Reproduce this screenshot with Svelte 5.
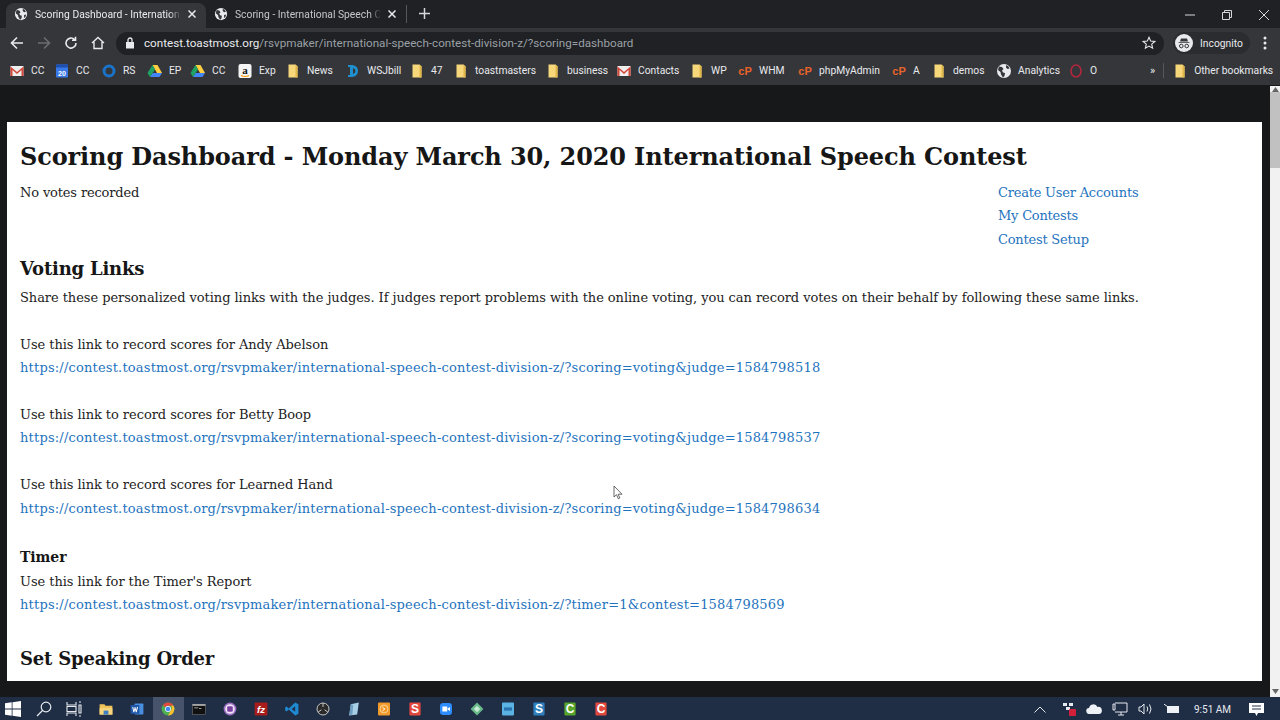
<script lang="ts">
  // Browser window with a scoring dashboard page, and the Windows taskbar below it.
  const site = 'https://contest.toastmost.org/rsvpmaker/international-speech-contest-division-z/';

  const judges = [
    { name: 'Andy Abelson', id: '1584798518' },
    { name: 'Betty Boop', id: '1584798537' },
    { name: 'Learned Hand', id: '1584798634' },
  ];

  const marks = [
    { kind: 'gmail', label: 'CC', w: 45 },
    { kind: 'cal', label: 'CC', w: 47 },
    { kind: 'ring', label: 'RS', w: 46 },
    { kind: 'drive', label: 'EP', w: 43 },
    { kind: 'drive', label: 'CC', w: 47 },
    { kind: 'amazon', label: 'Exp', w: 48 },
    { kind: 'folder', label: 'News', w: 60 },
    { kind: 'doc', label: 'WSJbill', w: 64 },
    { kind: 'folder', label: '47', w: 44 },
    { kind: 'folder', label: 'toastmasters', w: 92 },
    { kind: 'folder', label: 'business', w: 71 },
    { kind: 'gmail', label: 'Contacts', w: 73 },
    { kind: 'folder', label: 'WP', w: 48 },
    { kind: 'cp', label: 'WHM', w: 60 },
    { kind: 'cp', label: 'phpMyAdmin', w: 94 },
    { kind: 'cp', label: 'A', w: 40 },
    { kind: 'folder', label: 'demos', w: 65 },
    { kind: 'globe', label: 'Analytics', w: 72 },
    { kind: 'opera', label: 'O', w: 78 },
  ];

  const tasks = ['files', 'word', 'chrome', 'cmd', 'obs', 'fz', 'vs', 'cam', 'note', 'sub', 's1', 'zoom', 'gem', 'scr', 's2', 'c1', 'c2'];
</script>

{#snippet globe(size)}
  <svg class="fixed" width={size} height={size} viewBox="0 0 16 16">
    <circle cx="8" cy="8" r="7" fill="#e8eaed" />
    <path d="M3 3.500l3 .5 1.500 2-1.500 1.500 1 2 2 .5-.5 3-1.500 1.500-2-3-.5-2.500-2.500-2zM10 2l2.500 1.500 1 2-2 .5-1.500-1.500zM11.500 9l2.500-.5-1 3-1.500 1z" fill="#35363a" />
  </svg>
{/snippet}

{#snippet tabClose()}
  <svg class="fixed" width="8" height="8" viewBox="0 0 8 8"><path d="M.5.5l7 7M7.500.5l-7 7" stroke="#e8eaed" stroke-width="1.500" /></svg>
{/snippet}

{#snippet mark(kind)}
  <svg class="fixed" width="16" height="16" viewBox="0 0 16 16">
    {#if kind === 'gmail'}
      <rect x="1.500" y="3" width="13" height="10" fill="#eee" />
      <path d="M1.500 3.500L8 9l6.500-5.500V13h-2V7L8 11 3.500 7v6h-2z" fill="#d44638" />
    {:else if kind === 'cal'}
      <rect x="2" y="1.500" width="12" height="13" rx="1" fill="#3b78e7" />
      <rect x="2" y="1.500" width="12" height="3" fill="#1c4fb0" />
      <text x="8" y="12.500" text-anchor="middle" class="cal-num">20</text>
    {:else if kind === 'ring'}
      <circle cx="8" cy="8" r="5" fill="none" stroke="#1a73c8" stroke-width="3" />
    {:else if kind === 'drive'}
      <path d="M5.500 2h5l4.500 8h-5z" fill="#ffcf3f" />
      <path d="M3 14l2.500-4H15l-2.500 4z" fill="#4285f4" />
      <path d="M5.500 2l2.500 4.500L3 14l-2.500-4z" fill="#1ea362" />
    {:else if kind === 'amazon'}
      <rect x="1.500" y="1" width="13" height="14" rx="2" fill="#f5f5f5" />
      <text x="8" y="11" text-anchor="middle" class="amz">a</text>
      <path d="M4 12.500q4 2 8 0" fill="none" stroke="#f90" stroke-width="1.200" />
    {:else if kind === 'folder'}
      <path d="M3.500 1.500h7l2 2V14.500h-9z" fill="#f6d77a" />
      <path d="M10.500 1.500l2 2V14.500h-2z" fill="#e0b54a" />
    {:else if kind === 'doc'}
      <path d="M3 2h4.500q5.500 1 5.500 6t-5.500 6H3v-2h2V4H3z" fill="#1f8fce" />
      <path d="M8 5q2.500 1 2.500 3T8 11z" fill="#35363a" />
    {:else if kind === 'cp'}
      <text x="8" y="12" text-anchor="middle" class="cp">cP</text>
    {:else if kind === 'globe'}
      <circle cx="8" cy="8" r="7" fill="#e8eaed" />
      <path d="M3 3.500l3 .5 1.500 2-1.500 1.500 1 2 2 .5-.5 3-1.500 1.500-2-3-.5-2.500-2.500-2zM10 2l2.500 1.500 1 2-2 .5-1.500-1.500z" fill="#35363a" />
    {:else if kind === 'opera'}
      <ellipse cx="8" cy="8" rx="5" ry="6" fill="none" stroke="#b3263c" stroke-width="1.600" />
    {/if}
  </svg>
{/snippet}

{#snippet taskIcon(kind)}
  <svg width="20" height="20" viewBox="0 0 20 20">
    {#if kind === 'files'}
      <path d="M2 4h6l1.500 2H18v11H2z" fill="#f0c25a" />
      <rect x="2" y="9" width="16" height="8" fill="#f7d67d" />
      <rect x="7" y="12" width="6" height="5" fill="#3d7fc4" />
    {:else if kind === 'word'}
      <rect x="7" y="3" width="11" height="14" rx="1" fill="#4a8ee0" />
      <rect x="2" y="5" width="11" height="11" fill="#1f57a8" />
      <path d="M4 7.500h1.300l.9 4 1-4h.8l1 4 .9-4H11.300L9.700 14H8.500l-.9-3.500-.9 3.500H5.500z" fill="#fff" />
    {:else if kind === 'chrome'}
      <circle cx="10" cy="10" r="8" fill="#4caf50" />
      <path d="M10 2a8 8 0 0 1 7 4H10a4 4 0 0 0-3.500 2L3.800 5A8 8 0 0 1 10 2z" fill="#e2483d" />
      <path d="M17 6a8 8 0 0 1-7 12l3.500-6a4 4 0 0 0 0-6z" fill="#fbc02d" />
      <circle cx="10" cy="10" r="3.400" fill="#4285f4" stroke="#fff" stroke-width="1" />
    {:else if kind === 'cmd'}
      <rect x="2" y="4" width="16" height="13" fill="#111" stroke="#888" stroke-width=".6" />
      <rect x="2" y="4" width="16" height="2" fill="#bbb" />
      <path d="M4 8h5v1H4zM10 9h3v1h-3z" fill="#ccc" />
    {:else if kind === 'obs'}
      <circle cx="10" cy="10" r="8" fill="#9d6fc4" />
      <circle cx="10" cy="10" r="6" fill="#efe6f5" />
      <rect x="6.500" y="6.500" width="7" height="7" rx="1.500" fill="#7a3f9f" />
    {:else if kind === 'fz'}
      <rect x="2" y="2" width="16" height="16" rx="1" fill="#a81c1c" />
      <text x="10" y="15" text-anchor="middle" class="fz">fz</text>
    {:else if kind === 'vs'}
      <path d="M14 2l4 2v12l-4 2-8-7.500L3 13l-1.500-1V8L3 7l3 2.500z" fill="#1f8ad2" />
      <path d="M14 6.500L9.500 10l4.500 3.500z" fill="#1e3050" />
    {:else if kind === 'cam'}
      <circle cx="10" cy="10" r="7.500" fill="#2a2a2a" stroke="#ccc" stroke-width="1.200" />
      <path d="M10 2.500v5M3.800 14L8 11M16.200 14L12 11" stroke="#ccc" stroke-width="1.200" />
    {:else if kind === 'note'}
      <path d="M6 4l10-2-2 15-10 1z" fill="#a8cfe6" />
      <path d="M6 4l3 1-1 12-4 1z" fill="#6f9fc0" />
    {:else if kind === 'sub'}
      <rect x="2.500" y="2" width="15" height="16" rx="1" fill="#f09a2b" />
      <circle cx="10" cy="10" r="5" fill="none" stroke="#ffe0ac" stroke-width="1" />
      <path d="M8 7.500l3 2.500-3 2.500" fill="none" stroke="#fff" stroke-width="1.200" />
    {:else if kind === 's1'}
      <rect x="3" y="2" width="14" height="16" rx="1" fill="#e2483d" />
      <text x="10" y="15.500" text-anchor="middle" class="tile">S</text>
    {:else if kind === 'zoom'}
      <rect x="2.500" y="2.500" width="15" height="15" rx="4" fill="#2d8cff" />
      <path d="M5.500 7h6v6h-6zM12 9.500l3-2v5l-3-2z" fill="#fff" />
    {:else if kind === 'gem'}
      <path d="M10 2l8 8-8 8-8-8z" fill="#69b98a" />
      <path d="M10 6l4 4-4 4-4-4z" fill="#c7ecd4" />
    {:else if kind === 'scr'}
      <rect x="2.500" y="2" width="15" height="16" rx="1" fill="#5bb3e4" />
      <rect x="5" y="8" width="10" height="4" fill="#2872b0" />
    {:else if kind === 's2'}
      <rect x="3" y="2" width="14" height="16" rx="1" fill="#2f7fbe" />
      <text x="10" y="15.500" text-anchor="middle" class="tile">S</text>
    {:else if kind === 'c1'}
      <rect x="3" y="2" width="14" height="16" rx="1" fill="#57a62b" />
      <text x="10" y="15.500" text-anchor="middle" class="tile">C</text>
    {:else if kind === 'c2'}
      <rect x="3" y="2" width="14" height="16" rx="1" fill="#e2483d" />
      <text x="10" y="15.500" text-anchor="middle" class="tile">C</text>
    {/if}
  </svg>
{/snippet}

<div class="screen">
  <div class="tabstrip">
    <div class="tab active">
      {@render globe(14)}
      <span class="tab-title">Scoring Dashboard - Internationa</span>
      {@render tabClose()}
    </div>
    <div class="tab">
      {@render globe(14)}
      <span class="tab-title">Scoring - International Speech Cc</span>
      {@render tabClose()}
    </div>
    <span class="tab-sep"></span>
    <svg class="newtab" width="11" height="11" viewBox="0 0 11 11"><path d="M5.500 0v11M0 5.500h11" stroke="#d5d7da" stroke-width="1.500" /></svg>
    <div class="winbtns">
      <svg width="10" height="10" viewBox="0 0 10 10"><path d="M0 5h10" stroke="#d5d7da" /></svg>
      <svg width="10" height="10" viewBox="0 0 10 10"><path d="M2.500 2.500V.5h7v7h-2M.5 2.500h7v7h-7z" fill="none" stroke="#d5d7da" /></svg>
      <svg width="10" height="10" viewBox="0 0 10 10"><path d="M0 0l10 10M10 0L0 10" stroke="#d5d7da" /></svg>
    </div>
  </div>

  <div class="toolbar">
    <svg width="14" height="14" viewBox="0 0 14 14"><path d="M13 7H2M7 1.500L1.500 7 7 12.500" fill="none" stroke="#e8eaed" stroke-width="1.600" /></svg>
    <svg width="14" height="14" viewBox="0 0 14 14"><path d="M1 7h11M7 1.500L12.500 7 7 12.500" fill="none" stroke="#6b6d70" stroke-width="1.600" /></svg>
    <svg width="14" height="14" viewBox="0 0 14 14"><path d="M12 7a5 5 0 1 1-1.500-3.500M11.500 .8v3.500H8" fill="none" stroke="#e8eaed" stroke-width="1.600" /></svg>
    <svg width="14" height="14" viewBox="0 0 14 14"><path d="M1 7l6-5.500L13 7M3 6v6.500h8V6" fill="none" stroke="#e8eaed" stroke-width="1.400" /></svg>
    <div class="omnibox">
      <svg width="10" height="12" viewBox="0 0 10 12"><path d="M1 5h8v6.500H1z" fill="#e8eaed" /><path d="M3 5V3a2 2 0 0 1 4 0v2" fill="none" stroke="#e8eaed" stroke-width="1.300" /></svg>
      <span class="url"><b>contest.toastmost.org</b>/rsvpmaker/international-speech-contest-division-z/?scoring=dashboard</span>
      <svg width="14" height="14" viewBox="0 0 14 14"><path d="M7 1.300l1.700 3.800 4.100.4-3.100 2.700.9 4L7 10.100l-3.600 2.100.9-4L1.200 5.500l4.100-.4z" fill="none" stroke="#e8eaed" stroke-width="1.100" /></svg>
    </div>
    <div class="incog">
      <svg width="18" height="18" viewBox="0 0 18 18">
        <circle cx="9" cy="9" r="9" fill="#e8eaed" />
        <path d="M6 4.500h6l1 3H5zM3.500 8h11v.8h-11z" fill="#35363a" />
        <circle cx="6.300" cy="12" r="1.800" fill="none" stroke="#35363a" />
        <circle cx="11.700" cy="12" r="1.800" fill="none" stroke="#35363a" />
      </svg>
      <span>Incognito</span>
    </div>
    <svg width="4" height="14" viewBox="0 0 4 14"><circle cx="2" cy="2" r="1.500" fill="#e8eaed" /><circle cx="2" cy="7" r="1.500" fill="#e8eaed" /><circle cx="2" cy="12" r="1.500" fill="#e8eaed" /></svg>
  </div>

  <div class="bookmarks">
    {#each marks as m}
      <div class="bm" style="width: {m.w}px">
        {@render mark(m.kind)}
        <span>{m.label}</span>
      </div>
    {/each}
    <span class="more">»</span>
    <span class="bm-sep"></span>
    <div class="bm">
      {@render mark('folder')}
      <span>Other bookmarks</span>
    </div>
  </div>

  <div class="viewport">
    <div class="page">
      <div class="page-sheet">
        <h1>Scoring Dashboard - Monday March 30, 2020 International Speech Contest</h1>
        <div class="topline">
          <p class="novotes">No votes recorded</p>
          <div class="side">
            <a href="#a">Create User Accounts</a>
            <a href="#a">My Contests</a>
            <a href="#a">Contest Setup</a>
          </div>
        </div>
        <h2>Voting Links</h2>
        <p class="intro">Share these personalized voting links with the judges. If judges report problems with the online voting, you can record votes on their behalf by following these same links.</p>
        {#each judges as j}
          <div class="judge">
            <p>Use this link to record scores for {j.name}</p>
            <a href="#a">{site}?scoring=voting&amp;judge={j.id}</a>
          </div>
        {/each}
        <h3>Timer</h3>
        <p>Use this link for the Timer's Report</p>
        <a href="#a">{site}?timer=1&amp;contest=1584798569</a>
        <h2 class="order">Set Speaking Order</h2>
      </div>
      <svg class="cursor" width="10" height="15" viewBox="0 0 10 15"><path d="M1 1v11l2.500-2.300 1.800 4 1.600-.7-1.800-3.800H9z" fill="#fff" stroke="#444" stroke-width=".8" /></svg>
    </div>
    <div class="scrollbar">
      <svg width="7" height="5" viewBox="0 0 7 5"><path d="M3.500 0L7 5H0z" fill="#666" /></svg>
      <div class="thumb"></div>
      <svg class="down" width="7" height="5" viewBox="0 0 7 5"><path d="M3.500 5L7 0H0z" fill="#666" /></svg>
    </div>
  </div>

  <div class="taskbar">
    <svg class="win" width="16" height="16" viewBox="0 0 16 16"><path d="M0 2.300l6.700-1v6.300H0zM7.500 1.200L16 0v7.600H7.500zM0 8.400h6.700v6.300l-6.700-1zM7.500 8.400H16V16l-8.500-1.200z" fill="#fff" /></svg>
    <svg class="tb-glyph" width="16" height="16" viewBox="0 0 16 16"><circle cx="10" cy="6" r="4.800" fill="none" stroke="#e6e9ef" stroke-width="1.200" /><path d="M6.500 9.500L1 15" stroke="#e6e9ef" stroke-width="1.300" /></svg>
    <svg class="tb-glyph" width="16" height="16" viewBox="0 0 16 16"><path d="M1 1v3h9V1M1 15v-3h9v3M1 5.500h9v5H1zM13 1h2M13 4h2v8h-2zM13 15h2" fill="none" stroke="#e6e9ef" stroke-width="1.100" /></svg>
    <div class="tasks">
      {#each tasks as t}
        <div class="task" class:running={t === 'chrome'}>{@render taskIcon(t)}</div>
      {/each}
    </div>
    <div class="tray">
      <svg class="caret" width="12" height="7" viewBox="0 0 12 7"><path d="M.5 6.500L6 1l5.500 5.500" fill="none" stroke="#e6e9ef" /></svg>
      <svg width="14" height="14" viewBox="0 0 14 14"><path d="M1 1h4v3H1zM7 1h4v3H7zM4 5h4v3H4z" fill="#e6e9ef" /><rect x="7" y="7" width="7" height="7" rx="1" fill="#d3203a" /></svg>
      <svg width="16" height="10" viewBox="0 0 16 10"><path d="M3.500 10a3 3 0 0 1-.5-6 4.500 4.500 0 0 1 8.500-1 3.500 3.500 0 0 1 1.500 7z" fill="#eef1f5" /></svg>
      <svg width="16" height="14" viewBox="0 0 16 14"><path d="M3 1h12v9H3M9 10v3M6 13h6M1 2h2v6H1z" fill="none" stroke="#e6e9ef" /></svg>
      <svg width="16" height="14" viewBox="0 0 16 14"><path d="M1 5h2l3-3v10L3 9H1zM9 4.500q1.500 2.500 0 5M11.500 2.500q3 4.500 0 9" fill="none" stroke="#e6e9ef" /></svg>
      <svg width="16" height="10" viewBox="0 0 16 10"><path d="M3 2h12v7H3z" fill="#eef1f5" /><path d="M0 0l4 3" stroke="#eef1f5" /></svg>
      <span class="clock">9:51 AM</span>
      <svg width="15" height="15" viewBox="0 0 15 15"><path d="M0 1h15v10H9l-1.500 3L6 11H0z" fill="#fff" /><path d="M3 4h9M3 7h9" stroke="#24324a" /></svg>
    </div>
  </div>
</div>

<style>
  :global(body) { margin: 0; background: #17181a; }
  .screen { width: 1280px; height: 720px; overflow: hidden; display: flex; flex-direction: column; font-family: Roboto, "Liberation Sans", sans-serif; color: #e8eaed; }
  .fixed { flex-shrink: 0; }

  .tabstrip { height: 28px; background: #202124; display: flex; align-items: flex-end; padding-left: 6px; }
  .tab { width: 200px; height: 25px; padding: 0 10px 3px 8px; box-sizing: border-box; display: flex; align-items: center; gap: 7px; border-radius: 8px 8px 0 0; font-size: 10.300px; color: #c4c7ca; }
  .tab.active { background: #35363a; color: #e8eaed; }
  .tab-title { flex: 1; min-width: 0; white-space: nowrap; mask-image: linear-gradient(90deg, #000 92%, transparent); }
  .tab-sep { width: 1px; height: 18px; background: #55575a; margin-bottom: 5px; }
  .newtab { margin: 0 0 9px 12px; }
  .winbtns { margin-left: auto; display: flex; gap: 27px; align-items: center; padding: 0 11px 8px 0; }

  .toolbar { height: 30px; background: #35363a; display: flex; align-items: center; padding: 0 10px; gap: 13px; }
  .omnibox { width: 1048px; height: 23px; box-sizing: border-box; background: #202124; border-radius: 12px; display: flex; align-items: center; padding: 0 8px 0 9px; gap: 9px; margin-left: -2px; flex-shrink: 0; }
  .url { flex: 1; font-size: 11.650px; color: #9aa0a6; white-space: nowrap; }
  .url b { font-weight: 400; color: #e8eaed; }
  .incog { display: flex; align-items: center; gap: 7px; font-size: 10.300px; padding: 0 7px 0 2px; height: 22px; background: #2b2c30; border-radius: 11px; margin-left: -4px; flex-shrink: 0; }

  .bookmarks { height: 27px; box-sizing: border-box; padding: 0 0 2px 9px; background: #35363a; display: flex; align-items: center; font-size: 10.300px; color: #e8eaed; }
  .bm { display: flex; align-items: center; gap: 6px; flex-shrink: 0; white-space: nowrap; }
  .cal-num { font: 700 7px "Liberation Sans", sans-serif; fill: #fff; }
  .amz { font: 700 11px "Liberation Serif", serif; fill: #111; }
  .cp { font: 700 11px "Liberation Sans", sans-serif; fill: #e8632a; }
  .more { margin-left: 4px; font-size: 11px; }
  .bm-sep { width: 1px; height: 15px; background: #55575a; margin: 0 8px; }

  .viewport { flex: 1; display: flex; min-height: 0; background: #17181a; padding-top: 1px; }
  .page { flex: 1; padding: 36px 8px 16px 7px; position: relative; min-width: 0; }
  .page-sheet { background: #fff; height: 100%; box-sizing: border-box; padding: 19px 12px 0 13px; overflow: hidden; color: #222; font-family: "DejaVu Serif", "Liberation Serif", serif; font-size: 13px; letter-spacing: -0.06px; }
  .page-sheet p { margin: 0; line-height: 23.400px; height: 23.400px; white-space: nowrap; }
  .page-sheet a { display: block; color: #1e73be; text-decoration: none; line-height: 23.400px; height: 23.400px; white-space: nowrap; letter-spacing: 0.19px; }
  h1 { margin: 0; font-size: 24px; letter-spacing: -0.12px; line-height: 32px; font-weight: 700; color: #161616; white-space: nowrap; }
  h2 { margin: 0; font-size: 18px; letter-spacing: -0.2px; line-height: 24px; font-weight: 700; color: #161616; }
  h3 { margin: 25px 0 0; font-size: 14px; line-height: 25px; font-weight: 700; color: #161616; }
  .topline { display: flex; justify-content: space-between; margin-top: 8px; height: 76px; }
  .page-sheet .novotes { letter-spacing: -0.15px; }
  .side { width: 252px; }
  .page-sheet .side a { letter-spacing: -0.22px; }
  .page-sheet .intro { margin-top: 5px; }
  .judge { margin-top: 23.400px; }
  .page-sheet .order { margin-top: 30px; }
  .cursor { position: absolute; left: 613px; top: 399px; }

  .scrollbar { width: 10px; background: #f1f1f1; display: flex; flex-direction: column; align-items: center; padding-top: 1px; box-sizing: border-box; }
  .thumb { width: 10px; height: 76px; background: #c1c1c1; }
  .down { margin-top: auto; margin-bottom: 3px; }

  .taskbar { height: 23px; box-sizing: border-box; padding: 1px 0 0 5px; background: #1f2d45; display: flex; align-items: center; flex-shrink: 0; }
  .win { margin-right: 15px; }
  .tb-glyph { margin-right: 14px; }
  .tasks { display: flex; margin-left: -5px; margin-top: -1px; }
  .task { width: 30.900px; height: 23px; display: flex; align-items: center; justify-content: center; padding-top: 1px; box-sizing: border-box; }
  .task svg { width: 16px; height: 16px; }
  .task.running { background: #47536a; }
  .tray { margin-left: auto; display: flex; align-items: center; gap: 10px; padding-right: 16px; }
  .caret { margin-right: 6px; }
  .clock { font-size: 10px; color: #e6e9ef; margin: 0 8px 0 4px; }
  .fz { font: italic 700 12px "Liberation Sans", sans-serif; fill: #fff; }
  .tile { font: 700 15px "Liberation Sans", sans-serif; fill: #fff; }
</style>
